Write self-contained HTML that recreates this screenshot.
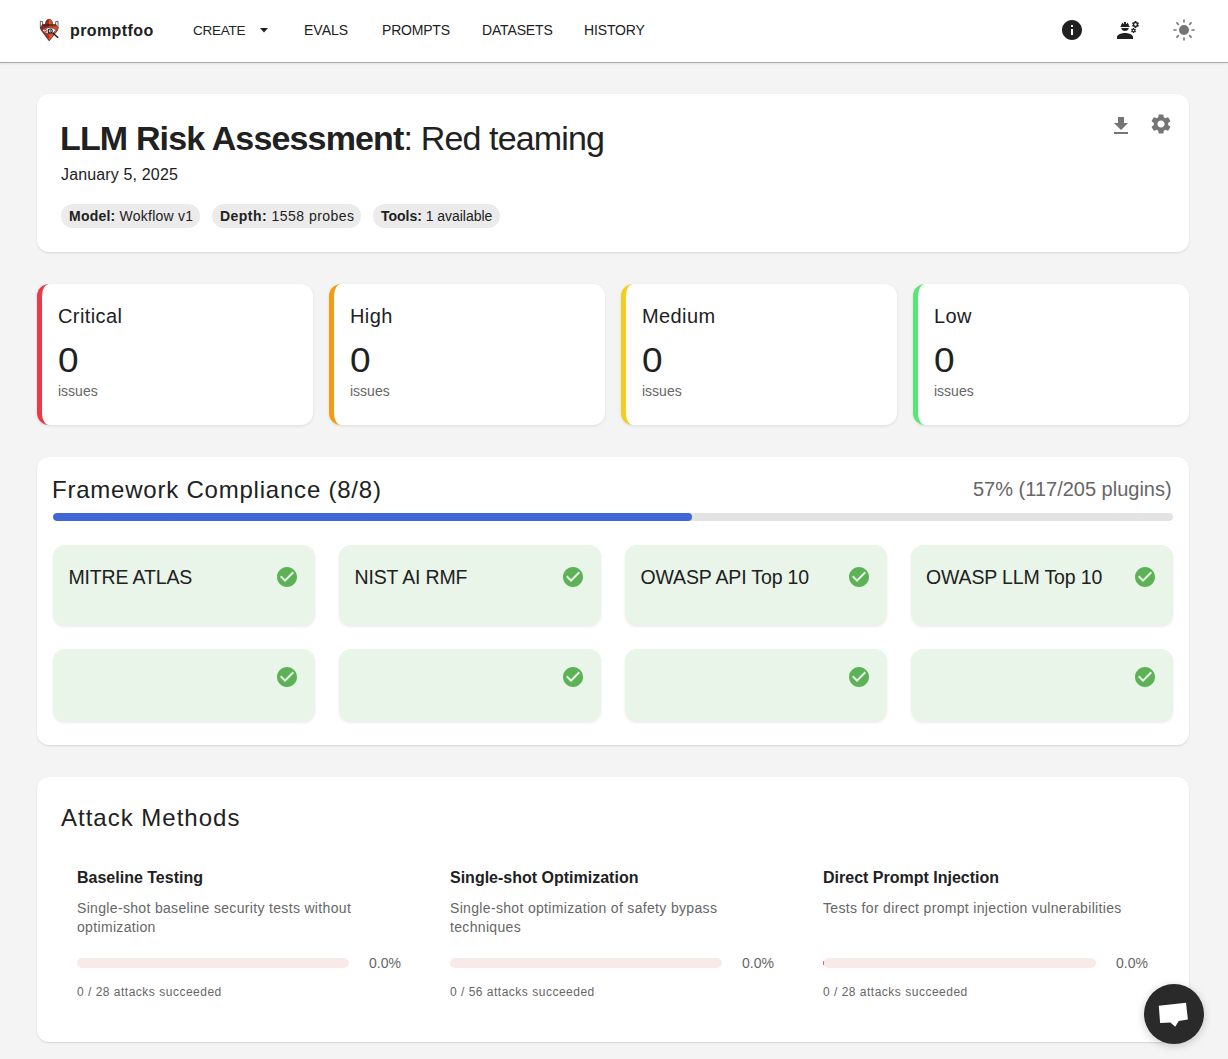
<!DOCTYPE html>
<html><head><meta charset="utf-8">
<style>
*{box-sizing:border-box;margin:0;padding:0}
html,body{width:1228px;height:1059px;overflow:hidden;background:#f4f4f4;font-family:"Liberation Sans",sans-serif;color:#212121}
.abs{position:absolute}
.t{position:absolute;white-space:nowrap;line-height:1}
#nav{position:absolute;left:0;top:0;width:1228px;height:63px;background:#fff;border-bottom:1px solid #a8a8a8;box-shadow:0 1px 2px rgba(0,0,0,.07)}
.card{position:absolute;background:#fff;border-radius:12px;box-shadow:0 1px 3px rgba(0,0,0,.08),0 1px 1px rgba(0,0,0,.05)}
.nav-item{font-size:14px;color:#212121}
.chip{position:absolute;top:204px;height:24px;border-radius:12px;background:#ebebeb}
.sev{position:absolute;top:284px;width:276px;height:141px;background:#fff;border-radius:12px;border-left:5px solid;box-shadow:0 1px 3px rgba(0,0,0,.10)}
.tile{position:absolute;width:262px;background:#e9f5e9;border-radius:12px;box-shadow:0 2px 3px rgba(0,0,0,.08)}
.bar{position:absolute;top:958px;height:10px;border-radius:5px;background:#f9eaea}
.sevh{font-size:20px;letter-spacing:.4px}
.zero{font-size:35.6px;transform:scaleX(1.04);transform-origin:0 0}
.iss{font-size:14px;color:#666}
.tt{font-size:19.5px;top:567.6px;letter-spacing:-.15px}
.bt{font-size:16px;font-weight:bold;top:869.8px}
.desc{font-size:14px;color:#666;letter-spacing:.33px}
.pct{font-size:14px;color:#666;top:956.4px}
.att{font-size:12px;color:#666;top:985.8px;letter-spacing:.5px}
</style></head>
<body>
<div id="nav"></div>
<svg class="abs" style="left:38px;top:17px" width="24" height="26" viewBox="0 0 24 26">
  <defs><linearGradient id="lg" x1="0" x2="1" y1="0" y2="0"><stop offset="0" stop-color="#8e2418"/><stop offset=".5" stop-color="#b8301c"/><stop offset=".5" stop-color="#f04e22"/><stop offset="1" stop-color="#e8461f"/></linearGradient></defs>
  <path d="M2.3 4.2 L4.6 4.6 L4.8 10.4 L2.4 11 Z" fill="#fff" stroke="#222" stroke-width=".7"/>
  <path d="M20 4.2 L17.7 4.6 L17.6 10.4 L20 10.8 Z" fill="#fff" stroke="#222" stroke-width=".7"/>
  <path d="M7.4 7.8 Q7.4 2.3 11.1 2.3 Q14.6 2.3 14.6 7.8 Z" fill="url(#lg)" stroke="#222" stroke-width=".6"/>
  <path d="M2.4 10.8 L4.6 7.5 L17.8 7.5 L20.2 10.8 L19.6 13.2 L11.2 23.9 L3.2 13.2 Z" fill="url(#lg)" stroke="#1a1a1a" stroke-width=".6"/>
  <path d="M4.6 8.8 L17.8 8.8" stroke="#1a1a1a" stroke-width=".8"/>
  <path d="M4.2 13.2 Q6.5 10.6 11.2 10.6 Q16 10.6 18.2 13.2 Q16 16.6 11.2 16.6 Q6.5 16.6 4.2 13.2 Z" fill="#fff" stroke="#1a1a1a" stroke-width=".6"/>
  <path d="M6 13 L9 11.5 M6.5 15 L9 13.5" stroke="#b8301c" stroke-width="1.1"/>
  <circle cx="12.2" cy="14" r="2" fill="#fff" stroke="#1a1a1a" stroke-width="1.1"/>
  <circle cx="12.2" cy="14" r=".7" fill="#1a1a1a"/>
  <path d="M14.8 16 L20.2 20.8" stroke="#1a1a1a" stroke-width="1.5"/>
</svg>
<div class="t" style="left:70px;top:22.5px;font-size:16px;font-weight:bold;letter-spacing:.4px">promptfoo</div>
<div class="t nav-item" style="left:193px;top:23.9px;font-size:13.5px;letter-spacing:-.25px">CREATE</div>
<svg class="abs" style="left:260px;top:28px" width="8" height="5" viewBox="0 0 8 5"><path d="M0 0 L8 0 L4 4.5Z" fill="#212121"/></svg>
<div class="t nav-item" style="left:304px;top:22.9px">EVALS</div>
<div class="t nav-item" style="left:382px;top:22.9px;letter-spacing:-.2px">PROMPTS</div>
<div class="t nav-item" style="left:482px;top:22.9px;letter-spacing:-.15px">DATASETS</div>
<div class="t nav-item" style="left:584px;top:22.9px;letter-spacing:-.15px">HISTORY</div>
<!-- info -->
<svg class="abs" style="left:1060px;top:18px" width="24" height="24" viewBox="0 0 24 24"><path fill="#212121" d="M12 2C6.48 2 2 6.48 2 12s4.48 10 10 10 10-4.48 10-10S17.52 2 12 2zm1 15h-2v-6h2v6zm0-8h-2V7h2v2z"/></svg>
<!-- engineering -->
<svg class="abs" style="left:1116px;top:18px" width="24" height="24" viewBox="0 0 24 24"><path fill="#212121" d="M9 15c-2.67 0-8 1.34-8 4v2h16v-2c0-2.66-5.33-4-8-4zm13.1-8.16c.01-.11.02-.22.02-.34 0-.12-.01-.23-.03-.34l.74-.58c.07-.05.08-.15.04-.22l-.7-1.21c-.04-.08-.14-.1-.21-.08l-.86.35c-.18-.14-.38-.25-.59-.34l-.13-.93c-.02-.09-.09-.15-.18-.15h-1.4c-.09 0-.16.06-.17.15l-.13.93c-.21.09-.41.21-.59.34l-.87-.35c-.08-.03-.17 0-.21.08l-.7 1.21c-.04.08-.03.17.04.22l.74.58c-.02.11-.02.23-.02.34 0 .11.01.23.02.34l-.74.58c-.07.05-.08.15-.04.22l.7 1.21c.04.08.14.1.21.08l.87-.35c.18.14.38.25.59.34l.13.93c.01.09.08.15.17.15h1.4c.09 0 .16-.06.17-.15l.13-.93c.21-.09.41-.21.59-.34l.87.35c.08.03.17 0 .21-.08l.7-1.21c.04-.08.03-.17-.04-.22l-.73-.58zm-2.6.91c-.69 0-1.25-.56-1.25-1.25s.56-1.25 1.25-1.25 1.25.56 1.25 1.25-.56 1.25-1.25 1.25zm.42 3.930-.5-.87c-.03-.06-.1-.08-.15-.06l-.62.25c-.13-.1-.27-.18-.42-.24l-.09-.66c-.02-.06-.08-.1-.14-.1h-1c-.06 0-.11.04-.12.11l-.09.66c-.15.06-.29.15-.42.24l-.62-.25c-.06-.02-.12 0-.15.06l-.5.87c-.03.06-.02.12.03.16l.53.41c-.01.08-.01.16-.01.24s.01.17.02.25l-.53.41c-.05.04-.06.11-.03.16l.5.87c.03.06.1.08.15.06l.62-.25c.13.1.27.18.42.24l.09.66c.01.07.06.11.12.11h1c.06 0 .12-.04.12-.11l.09-.66c.15-.06.29-.15.42-.24l.62.25c.06.02.12 0 .15-.06l.5-.87c.03-.06.02-.13-.03-.16l-.52-.41c.01-.08.02-.16.02-.24 0-.08-.01-.17-.02-.24l.53-.41c.05-.04.06-.11.04-.17zm-2.42 1.65c-.46 0-.83-.38-.83-.83 0-.46.38-.83.83-.83s.83.38.83.83c0 .46-.37.83-.83.83zM4.74 9h8.53c.27 0 .49-.22.49-.49v-.02c0-.27-.22-.49-.49-.49H13c0-1.48-.81-2.75-2-3.45v.95c0 .28-.22.5-.5.5s-.5-.22-.5-.5V4.14C9.68 4.06 9.35 4 9 4s-.68.06-1 .14V5.5c0 .28-.22.5-.5.5S7 5.78 7 5.5v-.95C5.810 5.25 5 6.52 5 8h-.26c-.27 0-.49.22-.49.49v.03c0 .26.22.48.49.48zM9 13c1.86 0 3.41-1.28 3.86-3H5.14c.45 1.72 2 3 3.86 3z"/></svg>
<!-- sun -->
<svg class="abs" style="left:1172px;top:18px" width="24" height="24" viewBox="0 0 24 24"><circle cx="12" cy="12" r="5" fill="#757575"/><g stroke="#757575" stroke-width="1.6" stroke-linecap="round"><path d="M12 2v2M12 20v2M2 12h2M20 12h2M4.93 4.93l1.41 1.41M17.66 17.66l1.41 1.41M4.93 19.07l1.41-1.41M17.66 6.34l1.41-1.41"/></g></svg>

<!-- header card -->
<div class="card" style="left:37px;top:94px;width:1152px;height:158px"></div>
<div class="t" style="left:60px;top:121.2px;font-size:34px;letter-spacing:-.85px"><b>LLM Risk Assessment</b>: Red teaming</div>
<div class="t" style="left:61px;top:167.1px;font-size:16px;letter-spacing:.15px">January 5, 2025</div>
<div class="chip" style="left:61px;width:139px"></div>
<div class="chip" style="left:212px;width:149px"></div>
<div class="chip" style="left:373px;width:127px"></div>
<div class="t" style="left:69px;top:208.9px;font-size:14px;letter-spacing:.23px"><b>Model:</b> Wokflow v1</div>
<div class="t" style="left:220px;top:208.9px;font-size:14px;letter-spacing:.47px"><b>Depth:</b> 1558 probes</div>
<div class="t" style="left:381px;top:208.9px;font-size:14px;letter-spacing:-.03px"><b>Tools:</b> 1 available</div>
<svg class="abs" style="left:1109px;top:114px" width="24" height="24" viewBox="0 0 24 24"><path fill="#757575" d="M19 9h-4V3H9v6H5l7 7 7-7zM5 18v2h14v-2H5z"/></svg>
<svg class="abs" style="left:1149px;top:112px" width="24" height="24" viewBox="0 0 24 24"><path fill="#757575" d="M19.14 12.94c.04-.3.06-.61.06-.94 0-.32-.02-.64-.07-.94l2.03-1.58c.18-.14.23-.41.12-.61l-1.92-3.32c-.12-.22-.37-.29-.59-.22l-2.39.96c-.5-.38-1.03-.7-1.62-.94l-.36-2.54c-.04-.24-.24-.41-.48-.41h-3.84c-.24 0-.43.17-.47.41l-.36 2.54c-.59.24-1.130.57-1.62.94l-2.39-.96c-.22-.08-.47 0-.59.22L2.74 8.87c-.12.21-.08.47.12.61l2.03 1.58c-.05.3-.09.63-.09.94s.02.64.07.94l-2.03 1.58c-.18.14-.23.41-.12.61l1.92 3.32c.12.22.37.29.59.22l2.39-.96c.5.38 1.03.7 1.62.94l.36 2.54c.05.24.24.41.48.41h3.84c.24 0 .44-.17.47-.41l.36-2.54c.59-.24 1.13-.56 1.62-.94l2.39.96c.22.08.47 0 .59-.22l1.92-3.32c.12-.22.07-.47-.12-.61l-2.01-1.58zM12 15.6c-1.98 0-3.6-1.62-3.6-3.6s1.62-3.6 3.6-3.6 3.6 1.62 3.6 3.6-1.62 3.6-3.6 3.6z"/></svg>

<!-- severity cards -->
<div class="sev" style="left:37px;border-color:#ee384a"></div>
<div class="sev" style="left:329px;border-color:#f39c12"></div>
<div class="sev" style="left:621px;border-color:#f3ce1e"></div>
<div class="sev" style="left:913px;border-color:#58e676"></div>
<div class="t sevh" style="left:58px;top:306px">Critical</div>
<div class="t sevh" style="left:350px;top:306px">High</div>
<div class="t sevh" style="left:642px;top:306px">Medium</div>
<div class="t sevh" style="left:934px;top:306px">Low</div>
<div class="t zero" style="left:58px;top:342.6px">0</div>
<div class="t zero" style="left:350px;top:342.6px">0</div>
<div class="t zero" style="left:642px;top:342.6px">0</div>
<div class="t zero" style="left:934px;top:342.6px">0</div>
<div class="t iss" style="left:58px;top:384px">issues</div>
<div class="t iss" style="left:350px;top:384px">issues</div>
<div class="t iss" style="left:642px;top:384px">issues</div>
<div class="t iss" style="left:934px;top:384px">issues</div>

<!-- framework card -->
<div class="card" style="left:37px;top:457px;width:1152px;height:288px"></div>
<div class="t" style="left:52px;top:477.8px;font-size:24px;letter-spacing:.78px">Framework Compliance (8/8)</div>
<div class="t" style="left:973px;top:479.1px;font-size:20px;color:#666">57% (117/205 plugins)</div>
<div class="abs" style="left:53px;top:513px;width:1120px;height:8px;border-radius:4px;background:#e3e3e3;overflow:hidden"><div style="width:639px;height:8px;background:#4166d5;border-radius:4px"></div></div>
<div class="tile" style="left:53px;top:545px;height:80px"></div>
<div class="tile" style="left:339px;top:545px;height:80px"></div>
<div class="tile" style="left:625px;top:545px;height:80px"></div>
<div class="tile" style="left:911px;top:545px;height:80px"></div>
<div class="tile" style="left:53px;top:649px;height:72px"></div>
<div class="tile" style="left:339px;top:649px;height:72px"></div>
<div class="tile" style="left:625px;top:649px;height:72px"></div>
<div class="tile" style="left:911px;top:649px;height:72px"></div>
<div class="t tt" style="left:68.5px">MITRE ATLAS</div>
<div class="t tt" style="left:354.5px">NIST AI RMF</div>
<div class="t tt" style="left:640.5px">OWASP API Top 10</div>
<div class="t tt" style="left:926px">OWASP LLM Top 10</div>
<svg width="0" height="0" style="position:absolute"><defs><path id="chk" fill="#5db257" d="M12 2C6.48 2 2 6.48 2 12s4.48 10 10 10 10-4.48 10-10S17.52 2 12 2zm-2 15-5-5 1.41-1.41L10 14.17l7.590-7.59L19 8l-9 9z"/></defs></svg>
<svg class="abs" style="left:275px;top:565px" width="24" height="24" viewBox="0 0 24 24"><use href="#chk"/></svg>
<svg class="abs" style="left:561px;top:565px" width="24" height="24" viewBox="0 0 24 24"><use href="#chk"/></svg>
<svg class="abs" style="left:847px;top:565px" width="24" height="24" viewBox="0 0 24 24"><use href="#chk"/></svg>
<svg class="abs" style="left:1133px;top:565px" width="24" height="24" viewBox="0 0 24 24"><use href="#chk"/></svg>
<svg class="abs" style="left:275px;top:665px" width="24" height="24" viewBox="0 0 24 24"><use href="#chk"/></svg>
<svg class="abs" style="left:561px;top:665px" width="24" height="24" viewBox="0 0 24 24"><use href="#chk"/></svg>
<svg class="abs" style="left:847px;top:665px" width="24" height="24" viewBox="0 0 24 24"><use href="#chk"/></svg>
<svg class="abs" style="left:1133px;top:665px" width="24" height="24" viewBox="0 0 24 24"><use href="#chk"/></svg>

<!-- attack card -->
<div class="card" style="left:37px;top:777px;width:1152px;height:265px"></div>
<div class="t" style="left:61px;top:805.7px;font-size:24px;letter-spacing:1px">Attack Methods</div>

<div class="t bt" style="left:77px">Baseline Testing</div>
<div class="t desc" style="left:77px;top:900.6px">Single-shot baseline security tests without</div>
<div class="t desc" style="left:77px;top:920.4px">optimization</div>
<div class="bar" style="left:77px;width:272px"></div>
<div class="t pct" style="left:369px">0.0%</div>
<div class="t att" style="left:77px">0 / 28 attacks succeeded</div>

<div class="t bt" style="left:450px">Single-shot Optimization</div>
<div class="t desc" style="left:450px;top:900.6px">Single-shot optimization of safety bypass</div>
<div class="t desc" style="left:450px;top:920.4px">techniques</div>
<div class="bar" style="left:450px;width:272px"></div>
<div class="t pct" style="left:742px">0.0%</div>
<div class="t att" style="left:450px">0 / 56 attacks succeeded</div>

<div class="t bt" style="left:823px">Direct Prompt Injection</div>
<div class="t desc" style="left:823px;top:900.6px">Tests for direct prompt injection vulnerabilities</div>
<div class="bar" style="left:823px;width:273px"></div><div class="abs" style="left:823px;top:961px;width:1.2px;height:4px;border-radius:1px;background:#d46a66"></div>
<div class="t pct" style="left:1116px">0.0%</div>
<div class="t att" style="left:823px">0 / 28 attacks succeeded</div>

<!-- chat bubble -->
<div class="abs" style="left:1144px;top:984px;width:60px;height:60px;border-radius:30px;background:#2a2a2a;box-shadow:0 2px 8px rgba(0,0,0,.2)">
  <svg class="abs" style="left:0;top:0" width="60" height="60" viewBox="0 0 60 60"><path d="M14.8 21.7 L42 18.7 L43.9 35.5 L34.8 37 L31.2 42.7 L26.4 38.5 L16.1 38.9Z" fill="#fff"/></svg>
</div>
</body></html>
